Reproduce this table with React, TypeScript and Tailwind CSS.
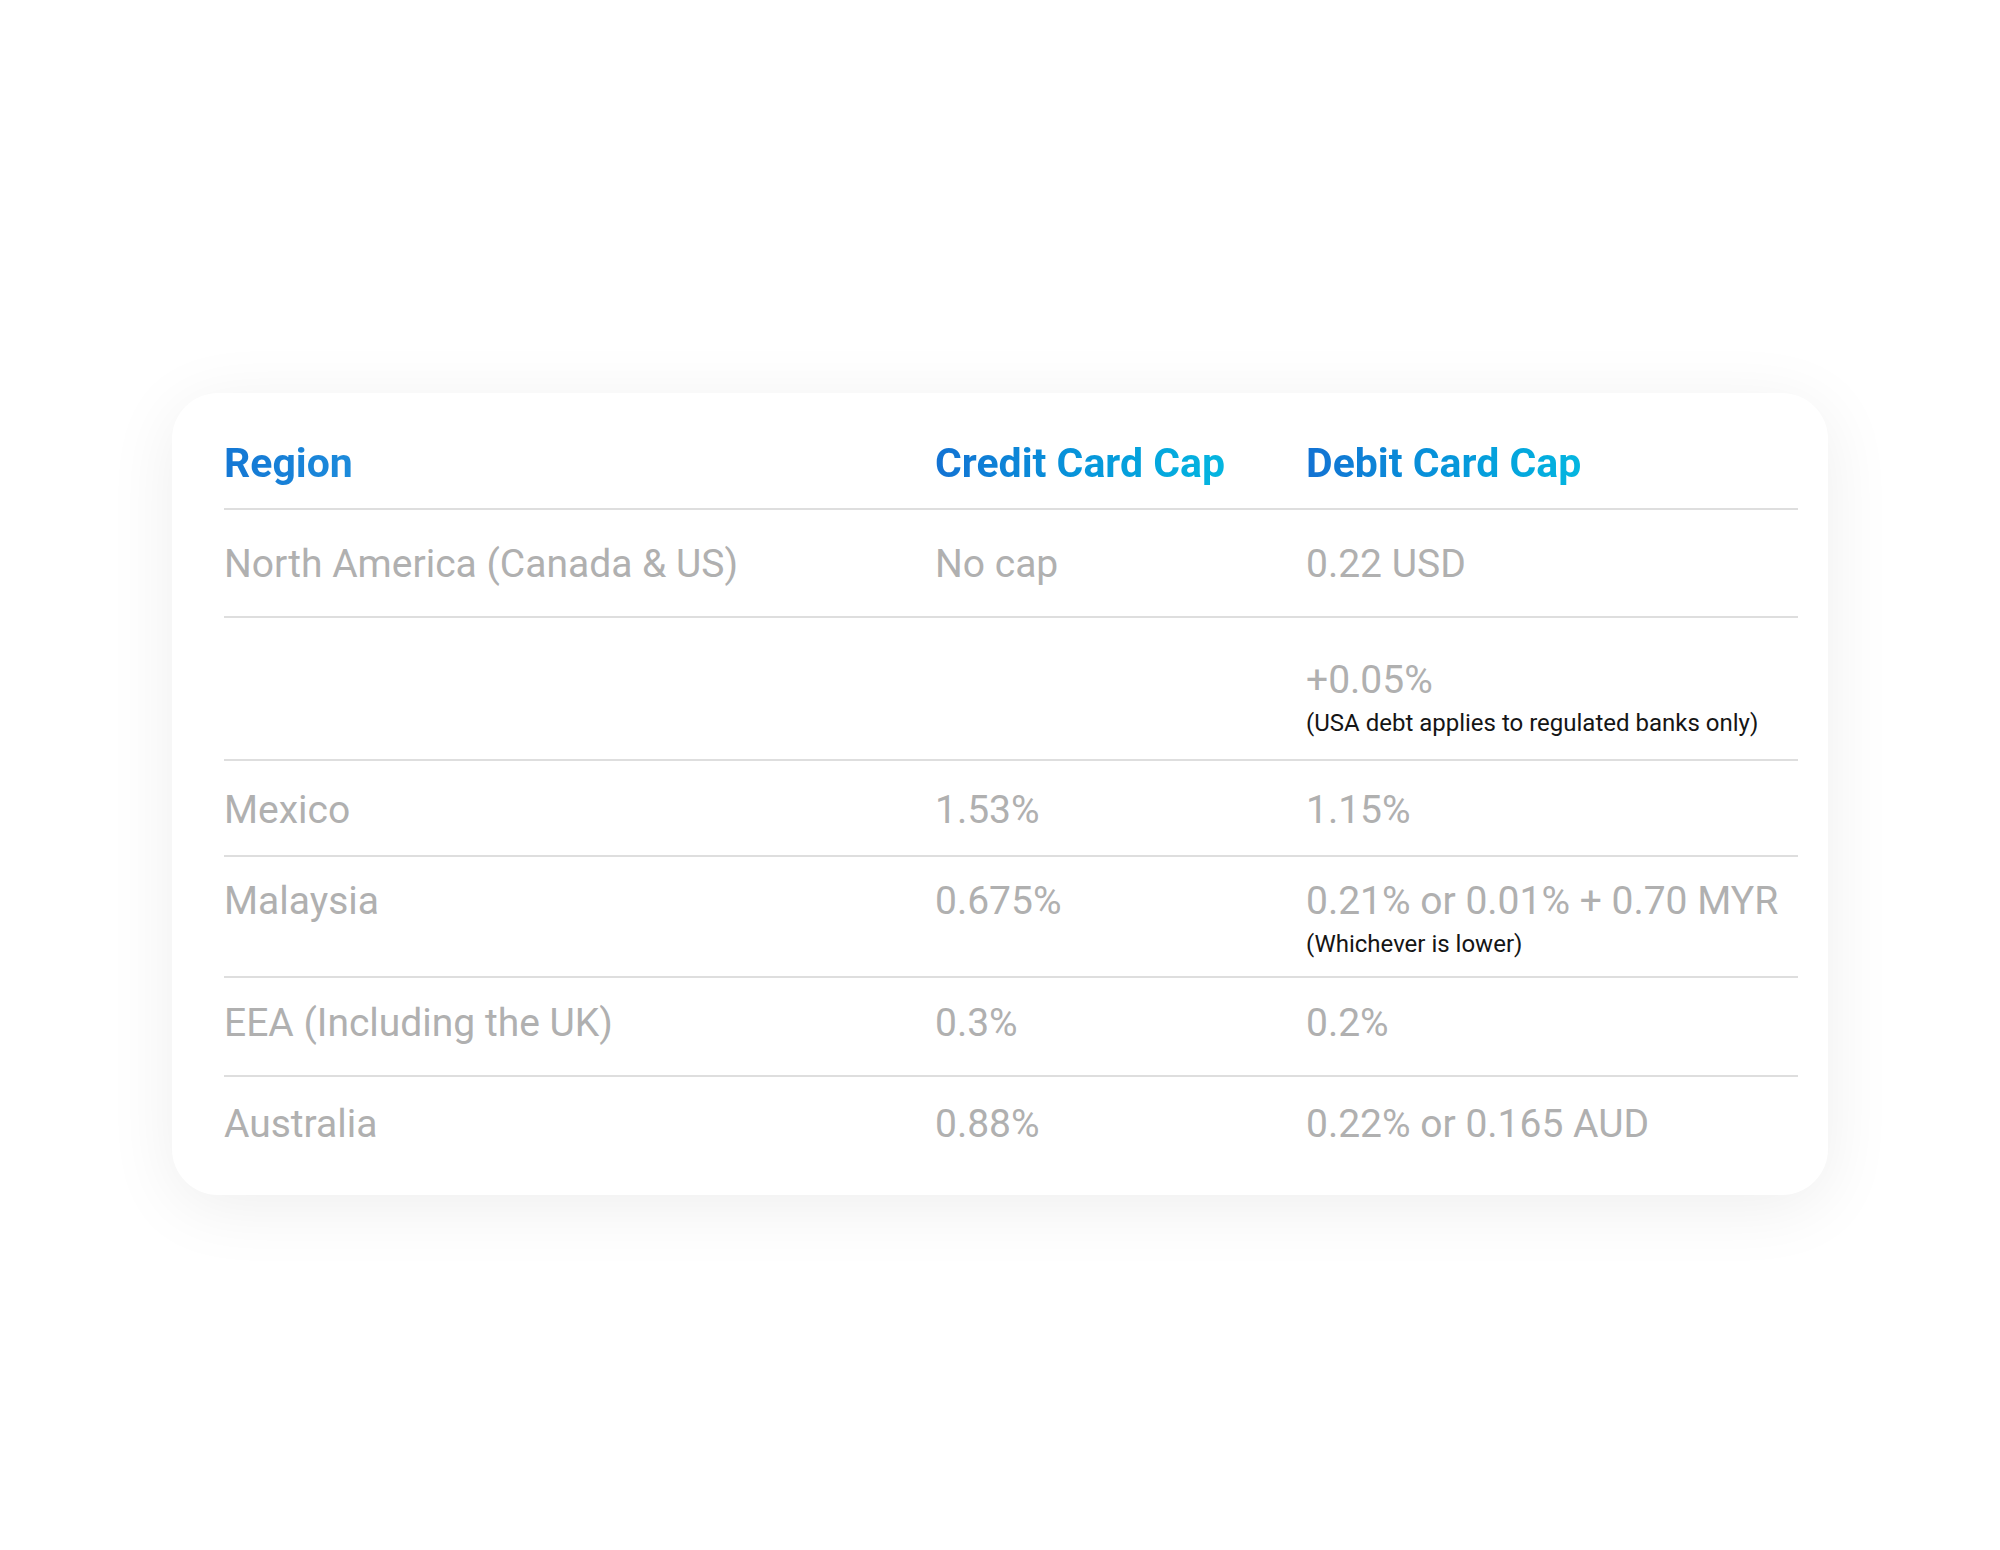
import React from 'react';

type Row = {
  region: string;
  credit: string;
  debit: string;
  note?: string;
  h: string;
  pt: string;
};

const rows: Row[] = [
  { region: 'North America (Canada & US)', credit: 'No cap', debit: '0.22 USD', h: 'h-[108px]', pt: 'pt-[30px]' },
  { region: '', credit: '', debit: '+0.05%', note: '(USA debt applies to regulated banks only)', h: 'h-[143px]', pt: 'pt-[38px]' },
  { region: 'Mexico', credit: '1.53%', debit: '1.15%', h: 'h-[96px]', pt: 'pt-[25px]' },
  { region: 'Malaysia', credit: '0.675%', debit: '0.21% or 0.01% + 0.70 MYR', note: '(Whichever is lower)', h: 'h-[121px]', pt: 'pt-[20px]' },
  { region: 'EEA (Including the UK)', credit: '0.3%', debit: '0.2%', h: 'h-[99px]', pt: 'pt-[21px]' },
  { region: 'Australia', credit: '0.88%', debit: '0.22% or 0.165 AUD', h: 'h-[118px]', pt: 'pt-[23px]' },
];

const headCls = 'bg-gradient-to-r from-[#1372d3] to-[#05b6e0] bg-clip-text text-transparent';

const App: React.FC = () => {
  return (
    <div className="min-h-screen bg-white pt-[393px] font-['Roboto',sans-serif]">
      <div className="mx-auto w-[1656px] rounded-[46px] bg-white pl-[52px] pr-[30px] shadow-[0_12px_70px_rgba(0,0,0,0.07)]">
        {/* header */}
        <div className="grid h-[117px] grid-cols-[711px_371px_1fr] border-b-2 border-[#dedede] pt-[46px] text-[41px] font-bold leading-[48px]">
          <div>
            <span className="bg-gradient-to-r from-[#1477d4] to-[#1d8bdb] bg-clip-text text-transparent">Region</span>
          </div>
          <div>
            <span className={headCls}>Credit Card Cap</span>
          </div>
          <div>
            <span className={headCls}>Debit Card Cap</span>
          </div>
        </div>

        {rows.map((row, i) => (
          <div
            key={i}
            className={`grid grid-cols-[711px_371px_1fr] text-[39px] leading-[48px] text-[#b0b0b0] ${row.h} ${row.pt} ${
              i < rows.length - 1 ? 'border-b-2 border-[#dedede]' : ''
            }`}
          >
            <div>{row.region}</div>
            <div>{row.credit}</div>
            <div>
              <div>{row.debit}</div>
              {row.note && (
                <div className="mt-[4px] text-[24px] leading-[30px] text-[#151515]">{row.note}</div>
              )}
            </div>
          </div>
        ))}
      </div>
    </div>
  );
};

export default App;
